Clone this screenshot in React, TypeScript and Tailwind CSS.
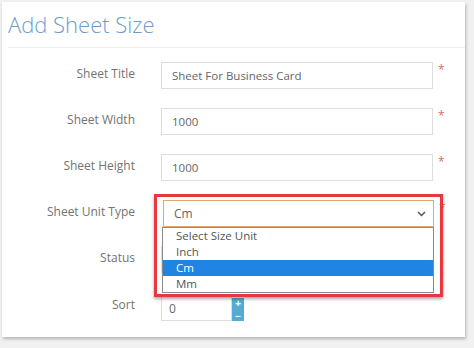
const font = { fontFamily: '"Open Sans", "Liberation Sans", sans-serif' };

function Row({ label, children, star = true, className = "", labelPad = "pt-[3px]" }: { label: string; children: React.ReactNode; star?: boolean; className?: string; labelPad?: string }) {
  return (
    <div className={`flex items-start ${className}`}>
      <label className={`w-[133px] text-right text-[12px] leading-[17px] text-[#737373] ${labelPad}`}>{label}</label>
      <div className="ml-[26px]">{children}</div>
      {star && <span className="ml-[5px] mt-[1px] text-[12px] leading-[14px] text-[#dc6c69]">*</span>}
    </div>
  );
}

function TextBox({ value }: { value: string }) {
  return (
    <div className="flex h-[27px] w-[272px] items-center border border-[#dedede] pl-[10px] text-[11.5px] text-[#666]">
      {value}
    </div>
  );
}

export default function App() {
  const options = ["Select Size Unit", "Inch", "Cm", "Mm"];
  return (
    <div className="h-[348px] w-[474px] bg-[#f1f1f1] pl-[2px] pt-[2px]" style={font}>
      <div className="relative h-[335px] w-[463px] bg-white shadow-[1px_2px_3px_rgba(0,0,0,0.25)]">
        <h1
          className="pl-[6px] pt-[8px] text-[22px] font-light leading-[28px] text-[#6b9bd0]"
          style={{ fontFamily: '"Open Sans Light", "Open Sans", sans-serif' }}
        >
          Add Sheet Size
        </h1>
        <div className="ml-[6px] mt-[9px] h-px bg-[#eeeeee]" />

        <div className="mt-[14px] flex flex-col gap-[19px]">
          <Row label="Sheet Title">
            <TextBox value="Sheet For Business Card" />
          </Row>
          <Row label="Sheet Width">
            <TextBox value="1000" />
          </Row>
          <Row label="Sheet Height">
            <TextBox value="1000" />
          </Row>
          <Row label="Sheet Unit Type">
            <div className="ml-[2px] flex h-[27px] w-[271px] items-center justify-between border border-[#e0a970] pl-[10px] pr-[7px] text-[12px] text-[#666]">
              <span>Cm</span>
              <svg width="9" height="6" viewBox="0 0 9 6" fill="none" stroke="#555" strokeWidth="1.5">
                <polyline points="1,1 4.5,4.5 8,1" />
              </svg>
            </div>
          </Row>
          <Row label="Status" star={false}>
            <div className="h-[27px] w-[272px] border border-[#dedede]" />
          </Row>
          <Row label="Sort" star={false} className="mt-[4px]" labelPad="pt-0">
            <div className="flex h-[25px]">
              <div className="flex w-[71px] items-center border border-[#dedede] pl-[7px] text-[12px] text-[#666]">0</div>
              <div className="mt-[2px] flex w-[12px] flex-col items-center justify-between bg-[#55acd3] text-[10px] font-bold leading-[10px] text-white">
                <span>+</span>
                <span>−</span>
              </div>
            </div>
          </Row>
        </div>

        {/* open dropdown list */}
        <div className="absolute left-[160px] top-[225px] w-[272px] border border-[#8a8a8a] bg-white text-[11.5px] leading-[16px] text-[#555]">
          {options.map((o) => (
            <div key={o} className={`pl-[13px] ${o === "Cm" ? "bg-[#1f84e2] text-white" : ""}`}>
              {o}
            </div>
          ))}
        </div>

        {/* highlight box */}
        <div className="absolute left-[152px] top-[192px] h-[103px] w-[289px] border-[3px] border-[#e8383d] shadow-[0_2px_3px_rgba(0,0,0,0.35)]" />
      </div>
    </div>
  );
}
